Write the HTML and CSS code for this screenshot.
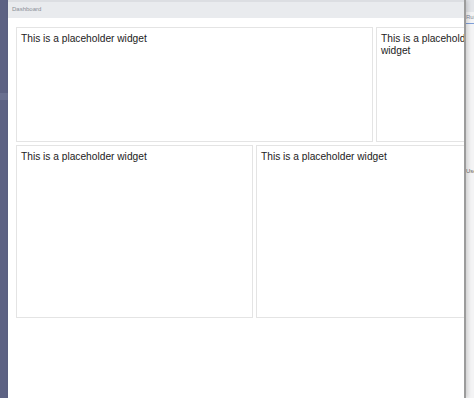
FILE: index.html
```html
<!DOCTYPE html>
<html>
<head>
<meta charset="utf-8">
<link rel="stylesheet" href="styles.css">
</head>
<body>
<div class="page">
  <div class="sidebar"><div class="sidebar-band"></div></div>
  <div class="page-main">
    <div class="page-top"></div>
    <div class="page-tab">Rules</div>
    <div class="page-text">Users</div>
  </div>
</div>
<div class="modal">
  <div class="modal-header">Dashboard</div>
  <div class="modal-body">
    <div class="row row-1">
      <div class="card card-wide">This is a placeholder widget</div>
      <div class="card card-narrow">This is a placeholder widget</div>
    </div>
    <div class="row row-2">
      <div class="card card-half">This is a placeholder widget</div>
      <div class="card card-half">This is a placeholder widget</div>
    </div>
  </div>
</div>
</body>
</html>
```
FILE: styles.css
```css
html, body {
  margin: 0;
  padding: 0;
  width: 474px;
  height: 398px;
  overflow: hidden;
  font-family: "Liberation Sans", Arial, sans-serif;
}
.page {
  display: flex;
  height: 398px;
  background: #f4f4f5;
}
.sidebar {
  width: 8px;
  background: #5d6283;
  display: flex;
  flex-direction: column;
}
.sidebar-band {
  margin-top: 93px;
  height: 7px;
  background: #6a7090;
}
.page-main {
  flex: 1;
  display: flex;
  flex-direction: column;
  align-items: flex-end;
}
.page-top {
  height: 12px;
  align-self: stretch;
  background: #e4e6ea;
}
.page-tab {
  width: 8px;
  overflow: hidden;
  font-size: 6px;
  color: #7d8aa0;
  padding-top: 2px;
  height: 9px;
  border-bottom: 1px solid #7f9fd8;
  white-space: nowrap;
}
.page-text {
  margin-top: 144px;
  width: 8px;
  overflow: hidden;
  font-size: 6px;
  color: #666;
  white-space: nowrap;
}
.modal {
  position: absolute;
  left: 8px;
  top: 0;
  width: 456px;
  height: 398px;
  background: #ffffff;
  border-right: 2px solid #9c9c9c;
  box-shadow: 2px 0 4px rgba(0,0,0,0.15);
  overflow: hidden;
  display: flex;
  flex-direction: column;
}
.modal-header {
  height: 16px;
  background: #e9ebee;
  border-top: 2px solid #dcdee2;
  font-size: 6px;
  line-height: 15px;
  color: #8a8f98;
  padding-left: 4px;
}
.modal-body {
  padding: 9px 0 0 8px;
  display: flex;
  flex-direction: column;
  gap: 3px;
}
.row {
  display: flex;
  gap: 3px;
}
.card {
  flex: none;
  box-sizing: border-box;
  border: 1px solid #e4e4e4;
  padding: 5px 4px;
  font-size: 10.2px;
  line-height: 12px;
  color: #222;
  overflow: hidden;
}
.row-1 .card { height: 115px; }
.row-2 .card { height: 173px; }
.card-wide { width: 357px; }
.card-narrow { width: 112px; }
.card-half { width: 237px; }
```
